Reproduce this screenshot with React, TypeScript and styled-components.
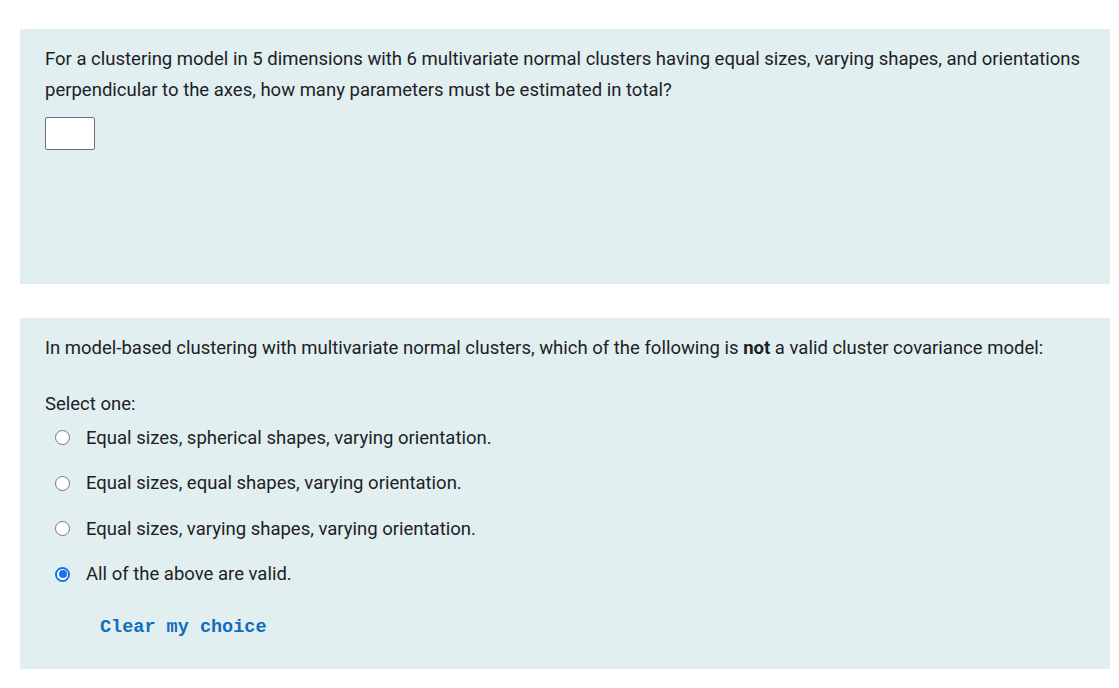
import styled, { createGlobalStyle } from 'styled-components';

const GlobalStyle = createGlobalStyle`
  body {
    margin: 0;
    background: #ffffff;
    font-family: Roboto, "Liberation Sans", Arial, sans-serif;
    color: #1d2125;
  }
`;

const Page = styled.div`
  padding: 29px 9px 19px 20px;
  display: flex;
  flex-direction: column;
  gap: 34px;
`;

const Panel = styled.div<{ $minHeight: number }>`
  background-color: #e1eff1;
  min-height: ${(props) => props.$minHeight}px;
  padding: 15px 18px 0 25px;
  box-sizing: border-box;
`;

const Question = styled.p`
  margin: 0;
  font-size: 18.5px;
  line-height: 30.5px;
`;

const AnswerInput = styled.input`
  display: block;
  margin-top: 12px;
  width: 50px;
  height: 33px;
  box-sizing: border-box;
  border: 1px solid #6a737b;
  border-radius: 2px;
  background: #ffffff;
`;

const Prompt = styled.div`
  margin-top: 25px;
  font-size: 18.5px;
  line-height: 30px;
`;

const Options = styled.div`
  display: flex;
  flex-direction: column;
  gap: 15.5px;
  margin-top: 4px;
  padding-left: 10px;
`;

const Option = styled.label`
  display: flex;
  align-items: center;
  gap: 16px;
  font-size: 18.5px;
  line-height: 30px;
`;

const Radio = styled.span<{ $checked?: boolean }>`
  width: 15px;
  height: 15px;
  border-radius: 50%;
  box-sizing: border-box;
  border: ${(props) => (props.$checked ? '2px solid #1a73e8' : '1px solid #767676')};
  background: #ffffff;
  display: flex;
  align-items: center;
  justify-content: center;
  margin-left: 0;
  &::after {
    content: '';
    width: 8px;
    height: 8px;
    border-radius: 50%;
    background: ${(props) => (props.$checked ? '#1a73e8' : 'transparent')};
  }
`;

const ClearButton = styled.button`
  margin: 24px 0 0 55px;
  padding: 0;
  border: none;
  background: none;
  font-family: "Liberation Mono", "DejaVu Sans Mono", monospace;
  font-size: 18.5px;
  font-weight: bold;
  color: #0f6cbf;
  line-height: 30px;
  cursor: pointer;
`;

const options = [
  { label: 'Equal sizes, spherical shapes, varying orientation.', checked: false },
  { label: 'Equal sizes, equal shapes, varying orientation.', checked: false },
  { label: 'Equal sizes, varying shapes, varying orientation.', checked: false },
  { label: 'All of the above are valid.', checked: true },
];

const App = () => {
  return (
    <Page>
      <GlobalStyle />
      <Panel $minHeight={255}>
        <Question>
          For a clustering model in 5 dimensions with 6 multivariate normal clusters having equal
          sizes, varying shapes, and orientations perpendicular to the axes, how many parameters
          must be estimated in total?
        </Question>
        <AnswerInput type="text" />
      </Panel>
      <Panel $minHeight={351}>
        <Question>
          In model-based clustering with multivariate normal clusters, which of the following is{' '}
          <b>not</b> a valid cluster covariance model:
        </Question>
        <Prompt>Select one:</Prompt>
        <Options>
          {options.map((o) => (
            <Option key={o.label}>
              <Radio $checked={o.checked} />
              {o.label}
            </Option>
          ))}
        </Options>
        <ClearButton>Clear my choice</ClearButton>
      </Panel>
    </Page>
  );
};

export default App;
